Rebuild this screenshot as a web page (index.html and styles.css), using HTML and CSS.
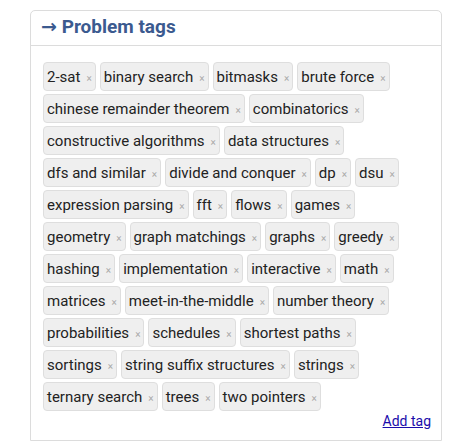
FILE: index.html
```html
<!DOCTYPE html>
<html>
<head>
<meta charset="utf-8">
<link rel="stylesheet" href="styles.css">
</head>
<body>
<div class="box">
  <div class="head"><span class="arrow">→</span> Problem tags</div>
  <div class="body">
    <div class="tags">
      <span class="tag">2-sat<span class="x">×</span></span>
      <span class="tag">binary search<span class="x">×</span></span>
      <span class="tag">bitmasks<span class="x">×</span></span>
      <span class="tag">brute force<span class="x">×</span></span>
      <span class="tag">chinese remainder theorem<span class="x">×</span></span>
      <span class="tag">combinatorics<span class="x">×</span></span>
      <span class="tag">constructive algorithms<span class="x">×</span></span>
      <span class="tag">data structures<span class="x">×</span></span>
      <span class="tag">dfs and similar<span class="x">×</span></span>
      <span class="tag">divide and conquer<span class="x">×</span></span>
      <span class="tag">dp<span class="x">×</span></span>
      <span class="tag">dsu<span class="x">×</span></span>
      <span class="tag">expression parsing<span class="x">×</span></span>
      <span class="tag">fft<span class="x">×</span></span>
      <span class="tag">flows<span class="x">×</span></span>
      <span class="tag">games<span class="x">×</span></span>
      <span class="tag">geometry<span class="x">×</span></span>
      <span class="tag">graph matchings<span class="x">×</span></span>
      <span class="tag">graphs<span class="x">×</span></span>
      <span class="tag">greedy<span class="x">×</span></span>
      <span class="tag">hashing<span class="x">×</span></span>
      <span class="tag">implementation<span class="x">×</span></span>
      <span class="tag">interactive<span class="x">×</span></span>
      <span class="tag">math<span class="x">×</span></span>
      <span class="tag">matrices<span class="x">×</span></span>
      <span class="tag">meet-in-the-middle<span class="x">×</span></span>
      <span class="tag">number theory<span class="x">×</span></span>
      <span class="tag">probabilities<span class="x">×</span></span>
      <span class="tag">schedules<span class="x">×</span></span>
      <span class="tag">shortest paths<span class="x">×</span></span>
      <span class="tag">sortings<span class="x">×</span></span>
      <span class="tag">string suffix structures<span class="x">×</span></span>
      <span class="tag">strings<span class="x">×</span></span>
      <span class="tag">ternary search<span class="x">×</span></span>
      <span class="tag">trees<span class="x">×</span></span>
      <span class="tag">two pointers<span class="x">×</span></span>
    </div>
    <div class="foot"><a class="add" href="#">Add tag</a></div>
  </div>
</div>
</body>
</html>
```
FILE: styles.css
```css
html, body {
  margin: 0;
  padding: 0;
  background: #fff;
}
body {
  padding: 10px 32px 0 30px;
  font-family: Roboto, "Liberation Sans", sans-serif;
}
.box {
  border: 1px solid #dcdcdc;
  border-radius: 5px 5px 0 0;
  height: 431px;
  box-sizing: border-box;
}
.head {
  height: 34px;
  border-bottom: 1px solid #dcdcdc;
  padding-left: 10px;
  font-size: 19px;
  font-weight: bold;
  color: #3b5a8f;
  line-height: 31px;
}
.arrow {
  font-family: "DejaVu Sans", sans-serif;
  font-size: 19px;
}
.body {
  padding: 16px 10px 0 12px;
}
.tags {
  display: flex;
  flex-wrap: wrap;
  gap: 3px 4px;
  margin-right: 14px;
}
.tag {
  display: inline-flex;
  align-items: center;
  height: 29px;
  box-sizing: border-box;
  padding: 0 3px 0 3px;
  background: #efefef;
  border: 1px solid #dedede;
  border-radius: 4px;
  font-size: 15px;
  color: #222;
}
.x {
  font-size: 10px;
  color: #aaa;
  margin-left: 6px;
  margin-top: 4px;
}
.foot {
  text-align: right;
  padding-top: 0;
}
.add {
  font-size: 14px;
  color: #1a0dab;
  text-decoration: underline;
}
```
